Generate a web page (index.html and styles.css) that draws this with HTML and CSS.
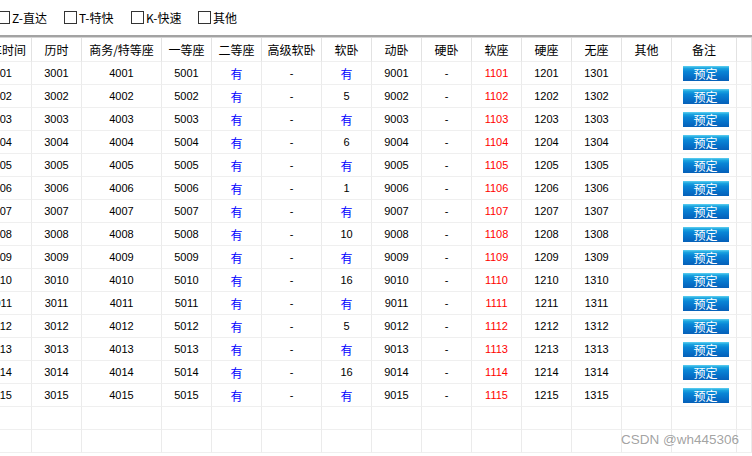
FILE: index.html
```html
<!DOCTYPE html>
<html lang="zh">
<head>
<meta charset="utf-8">
<link rel="stylesheet" href="styles.css">
</head>
<body>
<div class="page">
  <div class="filters">
    <label class="opt"><span class="box"></span><span class="lbl">Z-直达</span></label>
    <label class="opt"><span class="box"></span><span class="lbl">T-特快</span></label>
    <label class="opt"><span class="box"></span><span class="lbl">K-快速</span></label>
    <label class="opt"><span class="box"></span><span class="lbl">其他</span></label>
  </div>
  <div class="divider"></div>
  <div class="grid" id="grid">
    <div class="hd c0">发车时间</div>
    <div class="hd">历时</div>
    <div class="hd">商务/特等座</div>
    <div class="hd">一等座</div>
    <div class="hd">二等座</div>
    <div class="hd">高级软卧</div>
    <div class="hd">软卧</div>
    <div class="hd">动卧</div>
    <div class="hd">硬卧</div>
    <div class="hd">软座</div>
    <div class="hd">硬座</div>
    <div class="hd">无座</div>
    <div class="hd">其他</div>
    <div class="hd">备注</div>
    <div class="hd"></div>
  </div>
  <div class="watermark">CSDN @wh445306</div>
</div>
<script>
(function(){
  var g = document.getElementById('grid');
  var soft = ['有','5','有','6','有','1','有','10','有','16','有','5','有','16','有'];
  var html = '';
  for (var i = 1; i <= 15; i++) {
    var n = (i < 10 ? '0' : '') + i;
    html += '<div class="cell c0">20' + n + '</div>' +
      '<div class="cell">30' + n + '</div>' +
      '<div class="cell">40' + n + '</div>' +
      '<div class="cell">50' + n + '</div>' +
      '<div class="cell cjk blue">有</div>' +
      '<div class="cell">-</div>' +
      '<div class="cell' + (soft[i-1] === '有' ? ' cjk blue' : '') + '">' + soft[i-1] + '</div>' +
      '<div class="cell">90' + n + '</div>' +
      '<div class="cell">-</div>' +
      '<div class="cell red">11' + n + '</div>' +
      '<div class="cell">12' + n + '</div>' +
      '<div class="cell">13' + n + '</div>' +
      '<div class="cell"></div>' +
      '<div class="cell"><span class="btn">预定</span></div>' +
      '<div class="cell"></div>';
  }
  for (var r = 0; r < 2; r++) {
    for (var c = 0; c < 15; c++) html += '<div class="cell"></div>';
  }
  g.insertAdjacentHTML('beforeend', html);
})();
</script>
</body>
</html>
```

FILE: styles.css
```css
html, body {
  margin: 0;
  padding: 0;
  background: #fff;
}
.page {
  position: relative;
  width: 752px;
  height: 456px;
  overflow: hidden;
  font-family: "Noto Sans CJK SC", "Liberation Sans", sans-serif;
  font-size: 12px;
  color: #000;
}
.filters {
  height: 35px;
  display: grid;
  grid-template-columns: repeat(4, 67px);
  align-items: center;
  margin-left: -3px;
}
.opt {
  display: flex;
  align-items: center;
  gap: 2px;
}
.box {
  width: 11px;
  height: 11px;
  border: 1px solid #333;
  background: #fff;
  flex: none;
}
.lbl {
  font-size: 12px;
  line-height: 14px;
}
.divider {
  height: 2px;
  background: #a3a3a3;
  border-bottom: 1px solid #d4d4d4;
}
.grid {
  display: grid;
  grid-template-columns: 32px 50px 80px 50px 50px 60px 50px 50px 50px 50px 50px 50px 50px 65px 15px;
  grid-auto-rows: 23px;
  grid-template-rows: 24px;
}
.hd, .cell {
  box-sizing: border-box;
  border-right: 1px solid #ebebeb;
  border-bottom: 1px solid #efefef;
  display: flex;
  align-items: center;
  justify-content: center;
  white-space: nowrap;
  overflow: hidden;
}
.hd {
  border-right-color: #e2e2e2;
  font-size: 12px;
}
.cell {
  font-family: "Liberation Sans", sans-serif;
  font-size: 11px;
}
.hd.c0 {
  justify-content: flex-end;
  padding-right: 5px;
}
.cell.c0 {
  justify-content: flex-end;
  padding-right: 19px;
}
.cjk {
  font-family: "Noto Sans CJK SC", sans-serif;
  font-size: 12px;
}
.blue { color: #0000ff; }
.red { color: #ff0000; }
.btn {
  display: flex;
  align-items: center;
  justify-content: center;
  width: 46px;
  height: 15px;
  margin-left: 3px;
  font-family: "Noto Sans CJK SC", sans-serif;
  font-size: 12px;
  line-height: 15px;
  color: #fff;
  background: linear-gradient(#5fd0f0 0%, #1ba4e0 15%, #0a86d6 35%, #0670c8 70%, #0660b8 100%);
}
.watermark {
  position: absolute;
  left: 621px;
  top: 432px;
  font-family: "Liberation Sans", sans-serif;
  font-size: 13.5px;
  color: rgba(110, 110, 110, 0.65);
}
```
